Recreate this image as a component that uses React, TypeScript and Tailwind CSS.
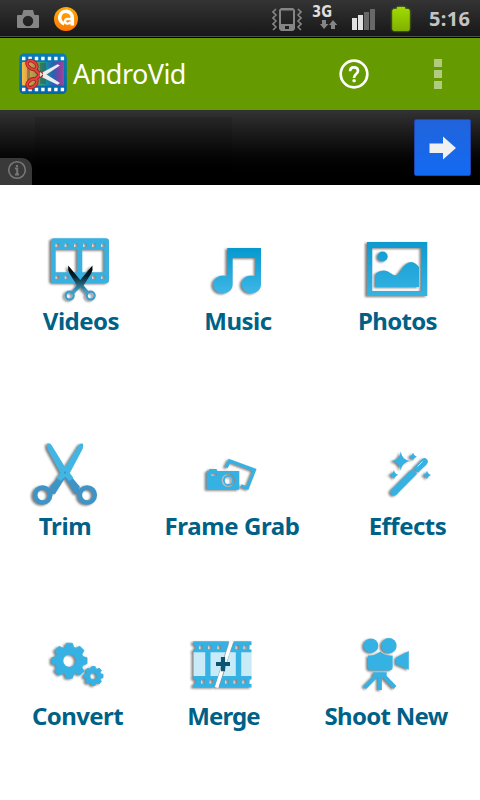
import type { ReactNode } from "react";

const FONT = "font-['Noto_Sans','Open_Sans',sans-serif]";

function Gear({ cx, cy, r, hole, fill }: { cx: number; cy: number; r: number; hole: number; fill: string }) {
  const points: string[] = [];
  const teeth = 8;
  const step = (Math.PI * 2) / teeth;
  for (let i = 0; i < teeth; i++) {
    const a = i * step - Math.PI / 2;
    const corners: [number, number][] = [
      [-0.3, 0.79],
      [-0.17, 1],
      [0.17, 1],
      [0.3, 0.79],
    ];
    corners.forEach(([o, k]) => {
      points.push(`${(cx + Math.cos(a + o) * r * k).toFixed(2)} ${(cy + Math.sin(a + o) * r * k).toFixed(2)}`);
    });
  }
  const ring = `M${cx - hole} ${cy}a${hole} ${hole} 0 1 0 ${hole * 2} 0a${hole} ${hole} 0 1 0 ${-hole * 2} 0Z`;
  return (
    <path
      d={`M${points.join("L")}Z${ring}`}
      fillRule="evenodd"
      fill={fill}
      stroke={fill}
      strokeWidth={0.8}
      strokeLinejoin="round"
    />
  );
}

function Icon({ viewBox, children }: { viewBox: string; children: ReactNode }) {
  return (
    <svg
      viewBox={viewBox}
      className="size-[72px] overflow-visible drop-shadow-[-1.5px_1.5px_1px_rgba(0,0,0,0.5)]"
    >
      {children}
    </svg>
  );
}

function Tile({ label, width, labelClass, children }: { label: string; width: string; labelClass: string; children: ReactNode }) {
  return (
    <div className={`flex shrink-0 flex-col items-center ${width}`}>
      {children}
      <span className={`-mt-[2px] text-[24px] leading-8 font-bold whitespace-nowrap text-[#006187] ${labelClass}`}>{label}</span>
    </div>
  );
}

function VideosIcon() {
  return (
    <Icon viewBox="45 235 72 72">
      <defs>
        <linearGradient id="blade" x1="0" y1="266" x2="0" y2="300" gradientUnits="userSpaceOnUse">
          <stop offset="0" stopColor="#000" />
          <stop offset="0.3" stopColor="#08202b" />
          <stop offset="0.75" stopColor="#3aa2cc" />
        </linearGradient>
      </defs>
      <path
        fillRule="evenodd"
        fill="#38b1e0"
        d="M54 238.3H106Q109 238.3 109 241.3V280.3Q109 283.3 106 283.3H54Q51 283.3 51 280.3V241.3Q51 238.3 54 238.3Z
        M55.7 249.7V272.3H77.3V249.7ZM82.3 249.7V272.3H104.3V249.7Z
        M55.5 243V247H59V243ZM64.7 243V247H68.2V243ZM74 243V247H77.5V243ZM83 243V247H86.5V243ZM92 243V247H95.5V243ZM101 243V247H104.5V243Z
        M55.5 275.3V279H59V275.3ZM64.7 275.3V279H68.2V275.3ZM92 275.3V279H95.5V275.3ZM101 275.3V279H104.5V275.3Z"
      />
      <path fill="url(#blade)" d="M68.2 265.5Q67.5 270 69.5 273.5L77 285.5L71 292.3L73.5 294.5L80.3 287.5L87 294.5L89.5 292.3L83.6 285.5L91.2 273.5Q93.2 270 92.4 265.5L80.3 280Z" />
      <circle cx="69.7" cy="295.6" r="4" fill="none" stroke="#3a9dca" strokeWidth="2.2" />
      <circle cx="90.7" cy="295.6" r="4" fill="none" stroke="#3a9dca" strokeWidth="2.2" />
    </Icon>
  );
}

function MusicIcon() {
  return (
    <Icon viewBox="202 235 72 72">
      <defs>
        <linearGradient id="note" x1="0" y1="248" x2="0" y2="294" gradientUnits="userSpaceOnUse">
          <stop offset="0" stopColor="#0599ce" />
          <stop offset="1" stopColor="#3fb7e7" />
        </linearGradient>
      </defs>
      <path
        fill="url(#note)"
        d="M227.3 248H261V284.5A9.7 9 0 1 1 255.7 276.4V258H232.7V284.5A9.8 9 0 1 1 227.3 276.4Z"
      />
    </Icon>
  );
}

function PhotosIcon() {
  return (
    <Icon viewBox="361.5 235 72 72">
      <defs>
        <linearGradient id="photo" x1="0" y1="242" x2="0" y2="296" gradientUnits="userSpaceOnUse">
          <stop offset="0" stopColor="#0d9acf" />
          <stop offset="1" stopColor="#36b3e3" />
        </linearGradient>
      </defs>
      <path fill="url(#photo)" fillRule="evenodd" d="M366.5 242H426.8V296H366.5ZM371.8 248V291H421V248Z" />
      <circle cx="382.2" cy="256.5" r="5" fill="url(#photo)" />
      <path
        fill="url(#photo)"
        d="M375.3 287V273.5Q380 270 384 270.5Q387 270.8 390 273Q393.5 276 396 275.3C400 273 403.5 262 411 262Q415 262.3 418.5 267V287Z"
      />
    </Icon>
  );
}

function TrimIcon() {
  return (
    <Icon viewBox="29 440 72 72">
      <g fill="none" stroke="#3d94c7" strokeWidth="4.6">
        <circle cx="42.7" cy="495" r="7.5" />
        <circle cx="87.3" cy="495" r="7.5" />
      </g>
      <path fill="#3d94c7" d="M60 475H70L79.8 486.5L78.5 494L75 494L65 478L55 494L51.5 494L50.2 486.5Z" />
      <path fill="#43b5e2" d="M47 443.7Q50 442.6 51.5 445L65 467L78.8 445Q80.3 442.6 83 443.8Q83.5 447 82.3 449.5L69.8 473L73.5 478L69.5 481L65 476.8L60.8 481L56.6 478L60.3 473L47.6 449.5Q46.5 446 47 443.7Z" />
      <circle cx="65" cy="472.5" r="1" fill="#2997c7" />
    </Icon>
  );
}

function FrameGrabIcon() {
  return (
    <Icon viewBox="196 440 72 72">
      <path d="M226.2 467.5L229.5 460.7L254.5 470L247.4 488L241 485.8" fill="none" stroke="#35b2e3" strokeWidth="3.2" />
      <path
        fill="#35b2e3"
        fillRule="evenodd"
        d="M207 471H208.5L209.5 469H216.5L217.5 471H239.3V489.7H206.7V471ZM211 473.8V475.7H216.7V473.8ZM221.6 480.4A6.7 6.7 0 1 0 235 480.4A6.7 6.7 0 1 0 221.6 480.4Z"
      />
      <circle cx="228.5" cy="480.4" r="4.6" fill="none" stroke="#35b2e3" strokeWidth="1.8" />
    </Icon>
  );
}

function EffectsIcon() {
  return (
    <Icon viewBox="371.5 440 72 72">
      <g fill="#35b2e3">
        <path d="M400.3 451.5Q401.4 460 409.8 461Q401.4 462.3 400.3 470.5Q399.1 462.3 390.8 461Q399.1 460 400.3 451.5Z" />
        <path d="M412.5 452.7Q413.3 455.7 416.3 456.7Q413.3 457.7 412.5 460.5Q411.5 457.7 408.8 456.7Q411.5 455.7 412.5 452.7Z" />
        <path d="M393.4 470Q394.4 474 398 474.7Q394.4 475.7 393.4 479.5Q392.4 475.7 388.6 474.7Q392.4 474 393.4 470Z" />
        <path d="M426.5 470.8Q427.5 474.3 430.7 475Q427.5 476 426.5 479Q425.5 476 422.3 475Q425.5 474.3 426.5 470.8Z" />
      </g>
      <path d="M393.3 492.3L414.2 471.3" stroke="#35b2e3" strokeWidth="7" />
      <path d="M393.6 492L395 490.6" stroke="#35b2e3" strokeWidth="7" strokeLinecap="round" />
      <path d="M415.2 470.3L423.8 461.8" stroke="#35b2e3" strokeWidth="6.6" />
      <path d="M423 462.6L424 461.6" stroke="#35b2e3" strokeWidth="6.6" strokeLinecap="round" />
      <path d="M417 466.5L422 461.5" stroke="#d8eef7" strokeWidth="0.9" />
    </Icon>
  );
}

function ConvertIcon() {
  return (
    <Icon viewBox="41.5 630 72 72">
      <Gear cx={69} cy={660.7} r={17.8} hole={6.6} fill="#35b2e3" />
      <Gear cx={93} cy={676} r={9.7} hole={3.6} fill="#35b2e3" />
    </Icon>
  );
}

function MergeIcon() {
  return (
    <Icon viewBox="187.5 630 72 72">
      <path fill="#c9eaf7" d="M193 652H225L217.5 676H193ZM229.5 652H251V676H222.5Z" />
      <path
        fill="#35b2e3"
        fillRule="evenodd"
        d="M192.7 641.3H228.5L225 652.3H210V676H217.7L213.8 687.5H192.7V684H195V679.5H192.7V676H204.7V652.3H192.7V649.5H195V645H192.7Z
        M198.5 645V649.2H202V645ZM207.5 645V649.2H211V645ZM216.8 645V649.2H220.3V645Z
        M200.5 679.5V683.7H204V679.5ZM209 679.5V683.7H212.5V679.5Z
        M233.5 641.3H251V645H249V649.5H251V652.3H240.7V676H251V679.5H249V684H251V687.5H218.5L222.2 676H235.3V652.3H230Z
        M235 645V649.2H238.5V645ZM242.8 645V649.2H246.3V645Z
        M224.5 679.5V683.7H228V679.5ZM233 679.5V683.7H236.5V679.5ZM241.8 679.5V683.7H245.3V679.5Z"
      />
      <path d="M231 641.5L216 687.5" stroke="#fff" strokeWidth="3.6" />
      <path d="M215.5 664H229.5M222.5 657V671.3" stroke="#0b5573" strokeWidth="4.2" />
    </Icon>
  );
}

function ShootIcon() {
  return (
    <Icon viewBox="350 630 72 72">
      <g fill="#35b2e3">
        <circle cx="371" cy="645.7" r="7.3" />
        <circle cx="389" cy="645.7" r="7.6" />
        <path d="M368 655.5Q375 656.3 380.3 651.5Q385 656.3 392.7 655.5V667Q392.7 670.4 389.3 670.4H371.3Q368 670.4 368 667Z" />
        <path d="M408.8 651V669.8L396 664.3V657.5Z" />
      </g>
      <path d="M373 674.3H386.7M377 675L364.7 687.5M379.9 674V690M383 675L395 687.5" fill="none" stroke="#35b2e3" strokeWidth="4" />
    </Icon>
  );
}

function StatusBar() {
  return (
    <header className="flex h-[38px] items-start border-b border-black bg-linear-to-b from-[#343434] to-[#171717] shadow-[inset_0_-1px_0_#505050]">
      <svg viewBox="17 0 22 36" className="ml-[17px] h-9 w-[22px]">
        <path fillRule="evenodd" fill="#858585" d="M18 15H22L23.5 10H33L34.5 15H38Q39 15 39 16V27Q39 28 38 28H18Q17 28 17 27V16Q17 15 18 15ZM22.8 21A5.2 5.2 0 1 0 33.2 21A5.2 5.2 0 1 0 22.8 21Z" />
      </svg>
      <svg viewBox="54 0 24 36" className="ml-[15px] h-9 w-6">
        <defs>
          <linearGradient id="badge" x1="0" y1="0" x2="0" y2="1">
            <stop offset="0" stopColor="#ffaa07" />
            <stop offset="1" stopColor="#ff7800" />
          </linearGradient>
        </defs>
        <circle cx="66" cy="19" r="12" fill="url(#badge)" />
        <path d="M64.3 23.7A6.3 6.3 0 1 1 72.3 18V25.5" fill="none" stroke="#fff" strokeWidth="3.6" />
        <path d="M71.5 19H67.3A2.1 2.1 0 0 0 67.3 23.6Q69.5 23.8 70.8 22" fill="none" stroke="#fff" strokeWidth="2.4" />
      </svg>
      <svg viewBox="272 0 30 36" className="ml-[194px] h-9 w-[30px]">
        <path fillRule="evenodd" fill="#858585" d="M281 8H293L295 10V29L293 31H281L279 29V10ZM281 10.5V24H293V10.5ZM285 26V29H289V26Z" />
        <path d="M276 9L273 12L276 15L273 18L276 21L273 24L276 27L273 30M298 9L301 12L298 15L301 18L298 21L301 24L298 27L301 30" fill="none" stroke="#858585" strokeWidth="1.6" />
      </svg>
      <svg viewBox="312 0 26 36" className="ml-[10px] h-9 w-[26px]">
        <text x="312" y="17" textLength="20" lengthAdjust="spacingAndGlyphs" className="fill-[#dedede] font-['DejaVu_Sans',sans-serif] text-[15px] font-bold">3G</text>
        <path fill="#858585" d="M322 20H326V24H328.5L324 29L320 24H322ZM333 20L337.3 25H335V29H331V25H329Z" />
      </svg>
      <svg viewBox="352 0 24 36" className="ml-[14px] h-9 w-6">
        <path fill="#e2e2e2" d="M352 18H357V30H352ZM358 15H363V30H358Z" />
        <path fill="#686868" d="M364 12H369V30H364ZM370 9H375V30H370Z" />
      </svg>
      <svg viewBox="391 0 20 36" className="ml-[15px] h-9 w-5 overflow-visible drop-shadow-[0_0_1px_#7db800]">
        <defs>
          <linearGradient id="cell" x1="0" y1="0" x2="0" y2="1">
            <stop offset="0" stopColor="#a0dc00" />
            <stop offset="1" stopColor="#80b000" />
          </linearGradient>
        </defs>
        <path fill="url(#cell)" d="M397 7H405V9H408.5L409.7 10.5V29.5L408.5 31H393.5L392.3 29.5V10.5L393.5 9H397Z" />
      </svg>
      <span className="ml-[18px] mt-[5px] text-[20px] leading-7 font-bold tracking-[0.3px] text-[#c4c4c4]">5:16</span>
    </header>
  );
}

function AppIcon() {
  return (
    <svg viewBox="19 53 48 41" className="h-[41px] w-12 shrink-0 -translate-y-px">
      <defs>
        <linearGradient id="spectrum">
          <stop offset="0" stopColor="#f2c044" />
          <stop offset="0.12" stopColor="#e6a14b" />
          <stop offset="0.3" stopColor="#a59a48" />
          <stop offset="0.45" stopColor="#3f9c6a" />
          <stop offset="0.6" stopColor="#1689a4" />
          <stop offset="0.75" stopColor="#2861b5" />
          <stop offset="0.9" stopColor="#8440a0" />
          <stop offset="1" stopColor="#a04a94" />
        </linearGradient>
        <linearGradient id="film" x1="0" y1="0" x2="0" y2="1">
          <stop offset="0" stopColor="#087cb8" />
          <stop offset="1" stopColor="#0568ae" />
        </linearGradient>
      </defs>
      <rect x="19.3" y="53.5" width="47.5" height="40.5" rx="4.5" fill="url(#film)" />
      <rect x="22" y="62" width="42" height="23.5" rx="1" fill="url(#spectrum)" />
      <path d="M40 63H46V70L41 74L46 78V84H40ZM27 68H30V80H27Z" fill="#234a48" opacity="0.4" />
      <path
        fill="#fff"
        d="M22 56.7h3.4v3.6h-3.4zM28.4 56.7h3.4v3.6h-3.4zM34.8 56.7h3.4v3.6h-3.4zM41.2 56.7h3.4v3.6h-3.4zM47.8 56.7h3.4v3.6h-3.4zM54.2 56.7h3.4v3.6h-3.4zM60.7 56.7h3.4v3.6h-3.4zM22 87.7h3.4v3.6h-3.4zM28.4 87.7h3.4v3.6h-3.4zM34.8 87.7h3.4v3.6h-3.4zM41.2 87.7h3.4v3.6h-3.4zM47.8 87.7h3.4v3.6h-3.4zM54.2 87.7h3.4v3.6h-3.4zM60.7 87.7h3.4v3.6h-3.4z"
      />
      <path d="M40.5 73.5L57.5 64.2L60 65.5L46.5 74.5L60 83L57.5 84.8L40.5 76.5Z" fill="#ececec" />
      <g fill="none" strokeLinecap="round">
        <path d="M41 75.5L36 70.5M41 73.5L36 79" stroke="#a41c1c" strokeWidth="4" />
        <g stroke="#a41c1c" strokeWidth="3.6">
          <ellipse cx="32" cy="65" rx="5.5" ry="3.6" transform="rotate(38 32 65)" />
          <ellipse cx="32" cy="83.3" rx="5.5" ry="3.6" transform="rotate(-38 32 83.3)" />
        </g>
        <path d="M41 75.5L36 70.5M41 73.5L36 79" stroke="#e74242" strokeWidth="2.2" />
        <g stroke="#e74242" strokeWidth="2">
          <ellipse cx="32" cy="65" rx="5.5" ry="3.6" transform="rotate(38 32 65)" />
          <ellipse cx="32" cy="83.3" rx="5.5" ry="3.6" transform="rotate(-38 32 83.3)" />
        </g>
      </g>
      <path d="M40 72L43 74.2L40 77Z" fill="#ddd" />
    </svg>
  );
}

function AppBar() {
  return (
    <div className="flex h-[72px] items-center bg-[#659a00] pl-[19px]">
      <AppIcon />
      <h1 className="ml-[6px] w-[120px] text-[27px] leading-9 font-normal tracking-[-0.55px] text-white">AndroVid</h1>
      <svg viewBox="338 58 32 32" className="ml-[145px] size-8 shrink-0">
        <circle cx="354" cy="74" r="13.3" fill="none" stroke="#fff" strokeWidth="2.7" />
        <path d="M350.1 71.2Q350.1 67.3 354 67.3Q358 67.3 358 70.8Q358 72.6 355.9 74.2Q354 75.7 354 78" fill="none" stroke="#fff" strokeWidth="2.7" />
        <rect x="352.5" y="79.2" width="3.2" height="3" rx="1" fill="#fff" />
      </svg>
      <div className="ml-16 flex flex-col gap-[3px]">
        <span className="size-2 bg-[#b1cc7e]" />
        <span className="size-2 bg-[#b1cc7e]" />
        <span className="size-2 bg-[#b1cc7e]" />
      </div>
    </div>
  );
}

function AdBanner() {
  return (
    <div className="flex h-[75px] justify-between bg-linear-to-b from-[#333] to-black">
      <div className="flex h-[27px] w-8 items-start self-end rounded-tr-[10px] bg-[#393939] pl-[7px] pt-[2px]">
        <svg viewBox="0 0 20 20" className="size-5">
          <circle cx="10" cy="10" r="8.3" fill="none" stroke="#777" strokeWidth="1.6" />
          <path d="M10 5V7M8 8.5H10.2V14M8 14.5H12" fill="none" stroke="#777" strokeWidth="2" />
        </svg>
      </div>
      <div className="mr-auto ml-[3px] mt-[7px] h-[68px] w-[197px] bg-black/10" />
      <div className="mt-[9px] mr-[9px] flex size-[57px] items-center justify-center rounded-[2px] border border-[#2444ad] bg-linear-to-b from-[#2064dc] to-[#126af2]">
        <svg viewBox="0 0 28 24" className="h-6 w-7">
          <path d="M0.5 7.5H14V0.5L27 12L14 23.5V17H0.5Z" fill="#f0f0f0" />
        </svg>
      </div>
    </div>
  );
}

export default function App() {
  return (
    <div className={`flex h-[800px] w-[480px] flex-col overflow-hidden bg-white ${FONT}`}>
      <StatusBar />
      <AppBar />
      <AdBanner />
      <main className="flex flex-col pt-[50px]">
        <div className="flex h-[205px]">
          <Tile label="Videos" width="w-[162px]" labelClass="tracking-[-0.5px]"><VideosIcon /></Tile>
          <Tile label="Music" width="w-[152px]" labelClass="tracking-[-0.5px]"><MusicIcon /></Tile>
          <Tile label="Photos" width="w-[167px]" labelClass="tracking-[-0.7px]"><PhotosIcon /></Tile>
        </div>
        <div className="flex h-[190px]">
          <Tile label="Trim" width="w-[130px]" labelClass="tracking-[-0.4px]"><TrimIcon /></Tile>
          <Tile label="Frame Grab" width="w-[204px]" labelClass="tracking-[-0.4px]"><FrameGrabIcon /></Tile>
          <Tile label="Effects" width="w-[147px]" labelClass="tracking-[-0.5px]"><EffectsIcon /></Tile>
        </div>
        <div className="flex">
          <Tile label="Convert" width="w-[155px]" labelClass="tracking-[-0.6px]"><ConvertIcon /></Tile>
          <Tile label="Merge" width="w-[137px]" labelClass="tracking-[-0.9px]"><MergeIcon /></Tile>
          <Tile label="Shoot New" width="w-[188px]" labelClass="tracking-[-0.7px]"><ShootIcon /></Tile>
        </div>
      </main>
    </div>
  );
}
